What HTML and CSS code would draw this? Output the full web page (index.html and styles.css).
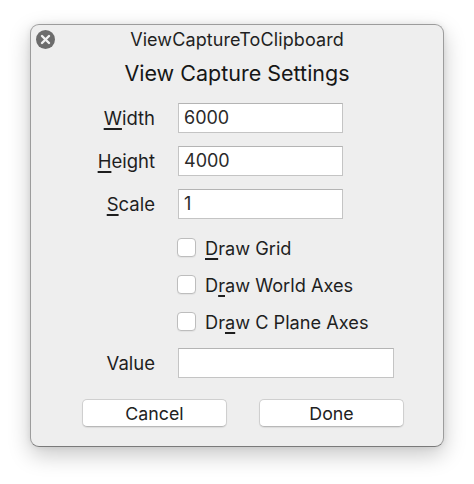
FILE: index.html
```html
<html>
  <head>
    <link rel="stylesheet" href="styles.css">
  </head>
  <body>
    <div class="dialog">
      <div class="titlebar">
        <span class="close-btn">
          <svg width="19" height="19" viewBox="0 0 19 19">
            <circle cx="9.5" cy="9.5" r="9.5" fill="#6c6c6c"/>
            <path d="M6 6 L13 13 M13 6 L6 13" stroke="#f2f2f2" stroke-width="2.4" stroke-linecap="round"/>
          </svg>
        </span>
        <span class="titlebar__text">ViewCaptureToClipboard</span>
      </div>
      <h1 class="heading">View Capture Settings</h1>

      <div class="fields">
        <label class="fields__label"><u>W</u>idth</label>
        <div class="text-input">6000</div>
        <label class="fields__label"><u>H</u>eight</label>
        <div class="text-input">4000</div>
        <label class="fields__label"><u>S</u>cale</label>
        <div class="text-input">1</div>
      </div>

      <div class="checks">
        <div class="check"><span class="check__box"></span><span><u>D</u>raw Grid</span></div>
        <div class="check"><span class="check__box"></span><span>D<u>r</u>aw World Axes</span></div>
        <div class="check"><span class="check__box"></span><span>Dr<u>a</u>w C Plane Axes</span></div>
      </div>

      <div class="fields fields--value">
        <label class="fields__label">Value</label>
        <div class="text-input text-input--wide"></div>
      </div>

      <div class="buttons">
        <div class="button">Cancel</div>
        <div class="button">Done</div>
      </div>
    </div>
  </body>
</html>
```

FILE: styles.css
```css
* {
  padding: 0;
  margin: 0;
  box-sizing: border-box;
}

html {
  font-family: "Inter", "Liberation Sans", sans-serif;
  color: #1e1e1e;
}

body {
  background: #ffffff;
}

.dialog {
  position: relative;
  margin: 24px 0 0 30px;
  width: 414px;
  height: 423px;
  background: #eeeeee;
  border: 1px solid #9c9c9c;
  border-bottom-color: #7a7a7a;
  border-radius: 9px;
  box-shadow: 0 8px 22px rgba(0, 0, 0, 0.22), 0 0 6px rgba(0, 0, 0, 0.08);
  display: flex;
  flex-direction: column;
}

.titlebar {
  height: 28px;
  display: flex;
  align-items: center;
  justify-content: center;
}

.close-btn {
  position: absolute;
  left: 5px;
  top: 5px;
  width: 19px;
  height: 19px;
}

.titlebar__text {
  font-size: 18px;
  letter-spacing: 0.1px;
  color: #1f1f1f;
}

.heading {
  margin-top: 7px;
  height: 26px;
  line-height: 26px;
  text-align: center;
  font-size: 21.5px;
  font-weight: 400;
  color: #161616;
}

.fields {
  margin-top: 17px;
  display: grid;
  grid-template-columns: 124px 165px;
  column-gap: 23px;
  row-gap: 13px;
  align-items: center;
}

.fields__label {
  text-align: right;
  font-size: 18.5px;
}

u {
  text-decoration-thickness: 1.5px;
  text-underline-offset: 3px;
}

.text-input {
  height: 30px;
  line-height: 28px;
  padding-left: 5px;
  background: #ffffff;
  border: 1px solid #c4c4c4;
  border-top-color: #b4b4b4;
  font-size: 18px;
  color: #2a2a2a;
}

.checks {
  margin: 10px 0 0 146px;
}

.check {
  height: 37px;
  display: flex;
  align-items: center;
  gap: 9px;
  font-size: 18.2px;
}

.check__box {
  width: 19px;
  height: 19px;
  background: #ffffff;
  border: 1px solid #bdbdbd;
  border-radius: 4px;
  box-shadow: 0 1px 1px rgba(0, 0, 0, 0.05);
}

.fields--value {
  margin-top: 8px;
  grid-template-columns: 124px 216px;
}

.buttons {
  margin-top: 21px;
  padding-left: 51px;
  display: flex;
  gap: 32px;
}

.button {
  width: 145px;
  height: 28px;
  line-height: 28px;
  text-align: center;
  background: #ffffff;
  border: 1px solid #cfcfcf;
  border-bottom-color: #b8b8b8;
  border-radius: 5px;
  box-shadow: 0 1px 1px rgba(0, 0, 0, 0.08);
  font-size: 17.8px;
  color: #222222;
}
```
